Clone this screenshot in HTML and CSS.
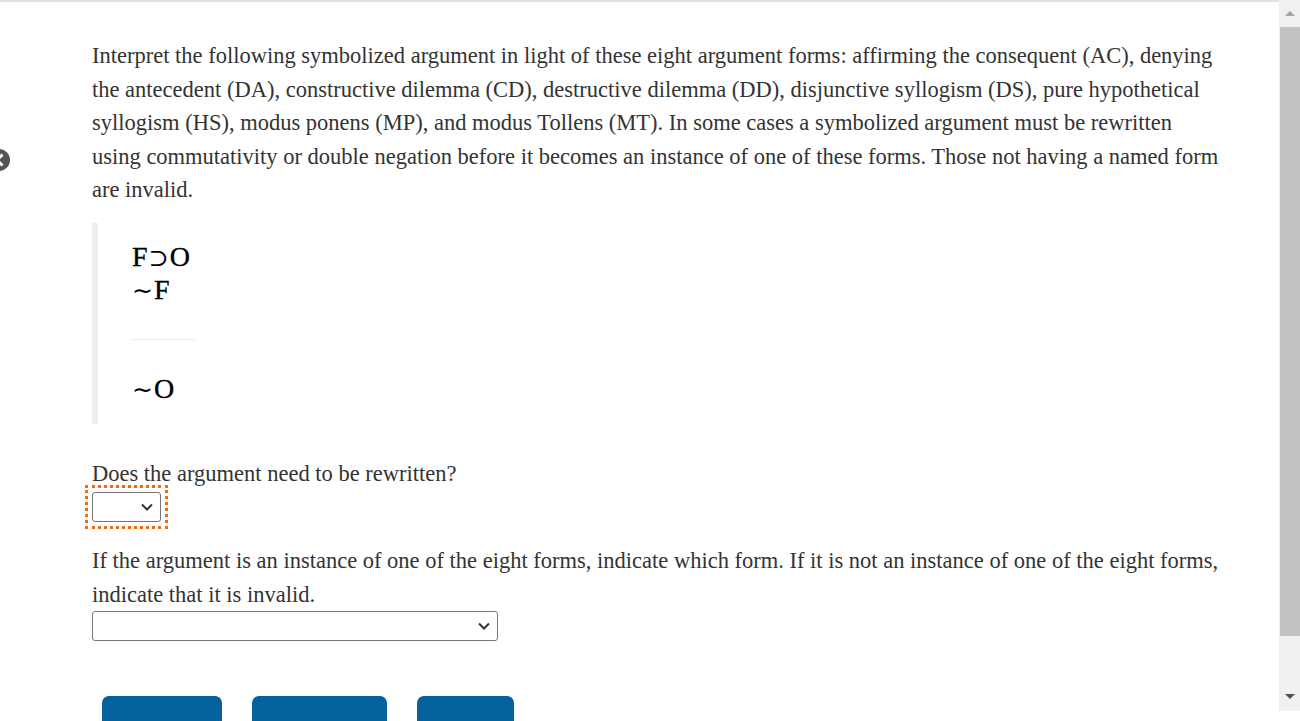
FILE: index.html
```html
<!DOCTYPE html>
<html>
<head>
<meta charset="utf-8">
<link rel="stylesheet" href="styles.css">
</head>
<body>
<div class="topline"></div>
<div class="side-tab">
  <svg width="24" height="24" viewBox="0 0 24 24"><circle cx="12" cy="12" r="11" fill="#555"/><path d="M15.5 6.5 L10 12 L15.5 17.5" fill="none" stroke="#fff" stroke-width="3"/></svg>
</div>
<main class="content">
  <p class="para">Interpret the following symbolized argument in light of these eight argument forms: affirming the consequent (AC), denying the antecedent (DA), constructive dilemma (CD), destructive dilemma (DD), disjunctive syllogism (DS), pure hypothetical syllogism (HS), modus ponens (MP), and modus Tollens (MT). In some cases a symbolized argument must be rewritten using commutativity or double negation before it becomes an instance of one of these forms. Those not having a named form are invalid.</p>
  <div class="argument">
    <div class="line">F<span class="sym sup">⊃</span>O</div>
    <div class="line"><span class="sym tilde">∼</span>F</div>
    <div class="rule"></div>
    <div class="line"><span class="sym tilde">∼</span>O</div>
  </div>
  <p class="question">Does the argument need to be rewritten?</p>
  <div class="focus-ring"><div class="select small"><svg class="chev" width="14" height="10" viewBox="0 0 14 10"><path d="M2 2.5 L7 7.5 L12 2.5" fill="none" stroke="#333" stroke-width="2"/></svg></div></div>
  <p class="para second">If the argument is an instance of one of the eight forms, indicate which form. If it is not an instance of one of the eight forms, indicate that it is invalid.</p>
  <div class="select wide"><svg class="chev" width="14" height="10" viewBox="0 0 14 10"><path d="M2 2.5 L7 7.5 L12 2.5" fill="none" stroke="#333" stroke-width="2"/></svg></div>
  <div class="buttons">
    <div class="btn b1"></div>
    <div class="btn b2"></div>
    <div class="btn b3"></div>
  </div>
</main>
<div class="scrollbar">
  <div class="arrow up"></div>
  <div class="thumb"></div>
  <div class="arrow down"></div>
</div>
</body>
</html>
```
FILE: styles.css
```css
html, body {
  margin: 0;
  padding: 0;
  background: #fff;
  overflow: hidden;
  height: 721px;
}
body {
  font-family: "Liberation Serif", "Times New Roman", serif;
  color: #333;
  position: relative;
}
.topline {
  height: 2px;
  background: #e2e2e2;
  width: 1279px;
}
.side-tab {
  position: absolute;
  left: -13px;
  top: 148px;
  width: 24px;
  height: 24px;
}
.content {
  padding: 37px 0 0 92px;
  width: 1130px;
}
.para {
  font-size: 22.5px;
  line-height: 33.5px;
  margin: 0;
}
.argument {
  margin-top: 16px;
  border-left: 6px solid #eeeeee;
  padding: 17px 0 18px 34px;
  height: 166px;
  font-family: "Liberation Serif", serif;
  font-size: 28px;
  line-height: 33px;
  color: #000;
}
.argument .line {
  height: 33px;
  -webkit-text-stroke: 0.35px #000;
}
.sym {
  font-family: "DejaVu Serif", serif;
  -webkit-text-stroke: 0;
  line-height: 33px;
}
.sup {
  font-size: 24px;
  margin: 0 1px;
}
.tilde {
  font-family: "DejaVu Sans", sans-serif;
  font-size: 25px;
  margin-right: 1px;
}
.rule {
  width: 63px;
  height: 1px;
  background: #eaeaea;
  margin: 33px 0 32px 0;
}
.question {
  font-size: 22.5px;
  line-height: 33.5px;
  margin: 33px 0 0 0;
}
.focus-ring {
  display: inline-block;
  outline: 3px dotted #f26a10;
  outline-offset: 4px;
  margin-top: 2px;
}
.select {
  box-sizing: border-box;
  height: 30px;
  border: 1px solid #767676;
  border-radius: 3px;
  background: #fff;
  display: flex;
  align-items: center;
  justify-content: flex-end;
  padding-right: 6px;
}
.select.small {
  width: 69px;
}
.select.wide {
  width: 406px;
}
.chev {
  display: block;
}
.second {
  margin-top: 22px;
}
.buttons {
  display: flex;
  gap: 30px;
  margin: 55px 0 0 10px;
}
.btn {
  height: 40px;
  background: #03619b;
  border-radius: 7px;
}
.b1 { width: 120px; }
.b2 { width: 135px; }
.b3 { width: 97px; }
.scrollbar {
  position: absolute;
  left: 1279px;
  top: 0;
  width: 21px;
  height: 711px;
  background: #f0f0f0;
}
.thumb {
  position: absolute;
  left: 1px;
  top: 27px;
  width: 20px;
  height: 609px;
  background: #c1c1c1;
}
.arrow {
  position: absolute;
  left: 6px;
  width: 0;
  height: 0;
  border-left: 5px solid transparent;
  border-right: 5px solid transparent;
}
.arrow.up {
  top: 11px;
  border-bottom: 5px solid #a3a3a3;
}
.arrow.down {
  top: 694px;
  border-top: 5px solid #505050;
}
```
